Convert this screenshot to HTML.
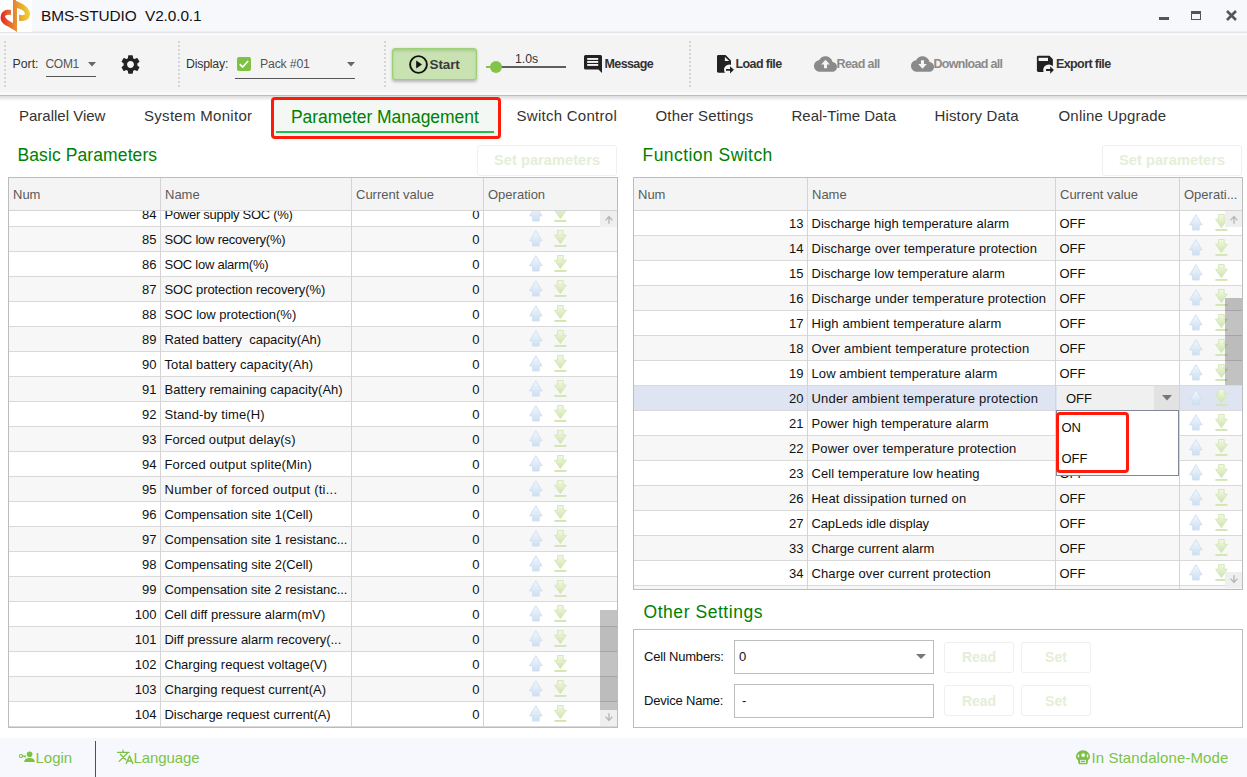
<!DOCTYPE html><html><head><meta charset="utf-8"><style>
html,body{margin:0;padding:0;}
body{width:1247px;height:777px;position:relative;overflow:hidden;background:#fff;font-family:"Liberation Sans", sans-serif;color:#000;}
.a{position:absolute;}
.t{position:absolute;white-space:nowrap;font-size:13px;line-height:1.15;color:#111;}
.clip{position:absolute;overflow:hidden;}
.ic{position:absolute;overflow:visible;}
svg{display:block}
</style></head><body>
<svg width="0" height="0" style="position:absolute"><defs>
<linearGradient id="gu" x1="0" y1="0" x2="0" y2="1"><stop offset="0" stop-color="#f2f8fe"/><stop offset="1" stop-color="#cddff2"/></linearGradient>
<linearGradient id="gd" x1="0" y1="0" x2="0" y2="1"><stop offset="0" stop-color="#f3f9e6"/><stop offset="1" stop-color="#cfe4aa"/></linearGradient>
<linearGradient id="glogo" x1="0" y1="0" x2="1" y2="0"><stop offset="0" stop-color="#e0262a"/><stop offset="0.45" stop-color="#e8842e"/><stop offset="1" stop-color="#ecd835"/></linearGradient>
</defs></svg>
<div class="a" style="left:0px;top:0px;width:1247px;height:32px;background:#f7f8fc"></div>
<div class="a" style="left:0px;top:31px;width:1247px;height:1px;background:#eeeff4"></div>
<div class="a" style="left:0px;top:32px;width:1247px;height:1px;background:#e3e4ea"></div>
<div class="a" style="left:0px;top:0px;width:32px;height:32px;background:#fff"></div>
<svg class="ic" style="left:0px;top:0px" width="32" height="32" viewBox="0 0 32 32"><path d="M13 0 L16 0 L16 1 C22 3 29 7 30 13 C30.5 18 27 21 22 21 L19 21 L19 14.5 C21 15.5 24 15.5 25 14 C25 11 21 9 17 8 L17 32 C13 29 9 27 5 25 C1 22 0 19 1 15 C2 11 6 9 11 10 L11 15 C8 14.5 5 15 5 16.5 C6 19 9 21 13 23 Z" fill="url(#glogo)"/></svg>
<div class="t" style="left:41px;top:6.660000000000002px;font-size:15.4px;color:#111;letter-spacing:-0.1px">BMS-STUDIO&nbsp; V2.0.0.1</div>
<div class="a" style="left:1159px;top:17px;width:9.5px;height:3px;background:#555"></div>
<div class="a" style="left:1191px;top:11px;width:10px;height:9px;box-sizing:border-box;border:1.5px solid #555;border-top-width:3px"></div>
<svg class="ic" style="left:1226px;top:10px" width="11" height="11" viewBox="0 0 11 11"><path d="M1 1 L10 10 M10 1 L1 10" stroke="#555" stroke-width="2.6"/></svg>
<div class="a" style="left:0px;top:33px;width:1247px;height:62px;background:linear-gradient(#fafafa 0px,#fafafa 2px,#f4f4f4 3px,#f4f4f4 59px,#fafafa 60px,#fafafa 62px)"></div>
<div class="a" style="left:0px;top:95px;width:1247px;height:1px;background:#bdbdbd"></div>
<div class="a" style="left:0px;top:96px;width:1247px;height:5px;background:linear-gradient(rgba(0,0,0,0.14),rgba(0,0,0,0))"></div>
<div class="a" style="left:4px;top:41px;width:2px;height:46px;background-image:linear-gradient(#d6d6d6 50%, transparent 50%);background-size:2px 4px"></div>
<div class="a" style="left:178px;top:41px;width:2px;height:46px;background-image:linear-gradient(#d6d6d6 50%, transparent 50%);background-size:2px 4px"></div>
<div class="a" style="left:383.5px;top:41px;width:2px;height:46px;background-image:linear-gradient(#d6d6d6 50%, transparent 50%);background-size:2px 4px"></div>
<div class="a" style="left:689px;top:41px;width:2px;height:46px;background-image:linear-gradient(#d6d6d6 50%, transparent 50%);background-size:2px 4px"></div>
<div class="t" style="left:12.5px;top:57.37px;font-size:12.3px;color:#333">Port:</div>
<div class="t" style="left:45.5px;top:57.64px;font-size:12px;color:#555;letter-spacing:-0.3px">COM1</div>
<svg class="ic" style="left:88px;top:61.5px" width="8" height="5" viewBox="0 0 8 5"><path d="M0 0 L8 0 L4 4.5 Z" fill="#666"/></svg>
<div class="a" style="left:46px;top:76px;width:50px;height:1px;background:#555"></div>
<svg class="ic" style="left:119.2px;top:52.5px" width="23" height="23" viewBox="0 0 24 24"><path fill="#222" d="M19.14 12.94c.04-.3.06-.61.06-.94 0-.32-.02-.64-.07-.94l2.03-1.58a.49.49 0 0 0 .12-.61l-1.92-3.32a.488.488 0 0 0-.59-.22l-2.39.96c-.5-.38-1.03-.7-1.62-.94l-.36-2.54a.484.484 0 0 0-.48-.41h-3.84c-.24 0-.43.17-.47.41l-.36 2.54c-.59.24-1.13.57-1.62.94l-2.39-.96c-.22-.08-.47 0-.59.22L2.74 8.87c-.12.21-.08.47.12.61l2.03 1.58c-.05.3-.09.63-.09.94s.02.64.07.94l-2.03 1.58a.49.49 0 0 0-.12.61l1.92 3.32c.12.22.37.29.59.22l2.39-.96c.5.38 1.03.7 1.62.94l.36 2.54c.05.24.24.41.48.41h3.84c.24 0 .44-.17.47-.41l.36-2.54c.59-.24 1.13-.56 1.62-.94l2.39.96c.22.08.47 0 .59-.22l1.92-3.32c.12-.22.07-.47-.12-.61l-2.01-1.58zM12 15.6c-1.98 0-3.6-1.62-3.6-3.6s1.62-3.6 3.6-3.6 3.6 1.62 3.6 3.6-1.62 3.6-3.6 3.6z"/></svg>
<div class="t" style="left:186px;top:57.37px;font-size:12.3px;color:#333;letter-spacing:-0.2px">Display:</div>
<div class="a" style="left:237px;top:57px;width:14px;height:14px;background:#7dc243;border-radius:2px"></div>
<svg class="ic" style="left:237px;top:57px" width="14" height="14" viewBox="0 0 14 14"><path d="M2.8 7.2 L5.6 10 L11.2 4" fill="none" stroke="#fff" stroke-width="1.7"/></svg>
<div class="t" style="left:260px;top:57.37px;font-size:12.3px;color:#555;letter-spacing:-0.2px">Pack #01</div>
<svg class="ic" style="left:347px;top:62px" width="8" height="5" viewBox="0 0 8 5"><path d="M0 0 L8 0 L4 4.5 Z" fill="#666"/></svg>
<div class="a" style="left:235px;top:78px;width:120px;height:1px;background:#555"></div>
<div class="a" style="left:391.5px;top:48px;width:85px;height:31.5px;box-sizing:border-box;background:#c9e2b1;border:1.5px solid #9ad172;border-radius:3px;box-shadow:inset 0 2px 3px rgba(0,0,0,0.13), 0 1.5px 3px rgba(0,0,0,0.25)"></div>
<svg class="ic" style="left:408.5px;top:55px" width="19" height="19" viewBox="0 0 19 19"><circle cx="9.5" cy="9.5" r="8.4" fill="none" stroke="#111" stroke-width="1.9"/><path d="M7.2 5.6 L13 9.5 L7.2 13.4 Z" fill="#111"/></svg>
<div class="t" style="left:429.5px;top:57.28px;font-size:13.5px;font-weight:bold;color:#3a3a3a;letter-spacing:-0.1px">Start</div>
<div class="a" style="left:486px;top:66px;width:10px;height:2px;background:#84c34a"></div>
<div class="a" style="left:496px;top:66px;width:70px;height:2px;background:#5e5e5e"></div>
<div class="a" style="left:490px;top:61px;width:12px;height:12px;background:#84c34a;border-radius:50%"></div>
<div class="t" style="left:515px;top:52.37px;font-size:12.3px;color:#333">1.0s</div>
<svg class="ic" style="left:584px;top:55px" width="18" height="18" viewBox="0 0 18 18"><path d="M1.5 0 L16.5 0 Q18 0 18 1.5 L18 18 L14.5 14.5 L1.5 14.5 Q0 14.5 0 13 L0 1.5 Q0 0 1.5 0 Z" fill="#222"/><rect x="3.2" y="3" width="11" height="1.9" fill="#f4f4f4"/><rect x="3.2" y="6" width="11" height="1.9" fill="#f4f4f4"/><rect x="3.2" y="9" width="11" height="1.9" fill="#f4f4f4"/></svg>
<div class="t" style="left:604.5px;top:56.69px;font-size:12.5px;font-weight:bold;color:#333;letter-spacing:-0.6px">Message</div>
<svg class="ic" style="left:716px;top:54px" width="19" height="21" viewBox="0 0 19 21"><path d="M2.4 1 L9.6 1 L15 6.5 L15 18.7 L2.4 18.7 Q1 18.7 1 17.3 L1 2.4 Q1 1 2.4 1 Z" fill="#222"/><path d="M8.9 2.9 L8.9 6.9 L13.2 6.9 Z" fill="#f4f4f4"/><circle cx="13.3" cy="15.8" r="5.3" fill="#f4f4f4"/><path d="M10 14.9 L14 14.9 L14 12.2 L17.9 15.8 L14 19.5 L14 16.7 L10 16.7 Z" fill="#222"/></svg>
<div class="t" style="left:735.5px;top:56.69px;font-size:12.5px;font-weight:bold;color:#333;letter-spacing:-0.6px">Load file</div>
<svg class="ic" style="left:814px;top:56px" width="23" height="16" viewBox="0 0 24 16"><path d="M19.35 6.04C18.67 2.59 15.64 0 12 0 9.11 0 6.6 1.64 5.35 4.04 2.34 4.36 0 6.91 0 10c0 3.31 2.69 6 6 6h13c2.76 0 5-2.24 5-5 0-2.64-2.05-4.78-4.65-4.96z" fill="#8a8a8a"/><path d="M12 3.5 L16.5 8.5 L13.6 8.5 L13.6 12.5 L10.4 12.5 L10.4 8.5 L7.5 8.5 Z" fill="#f4f4f4"/></svg>
<div class="t" style="left:836.5px;top:56.69px;font-size:12.5px;font-weight:bold;color:#8a8a8a;letter-spacing:-0.6px">Read all</div>
<svg class="ic" style="left:911px;top:56px" width="23" height="16" viewBox="0 0 24 16"><path d="M19.35 6.04C18.67 2.59 15.64 0 12 0 9.11 0 6.6 1.64 5.35 4.04 2.34 4.36 0 6.91 0 10c0 3.31 2.69 6 6 6h13c2.76 0 5-2.24 5-5 0-2.64-2.05-4.78-4.65-4.96z" fill="#8a8a8a"/><path d="M12 13 L16.5 8 L13.6 8 L13.6 4 L10.4 4 L10.4 8 L7.5 8 Z" fill="#f4f4f4"/></svg>
<div class="t" style="left:933.5px;top:56.69px;font-size:12.5px;font-weight:bold;color:#8a8a8a;letter-spacing:-0.7px">Download all</div>
<svg class="ic" style="left:1036px;top:54px" width="19" height="21" viewBox="0 0 19 21"><path d="M2.3 1.8 L13.5 1.8 L16.9 5.3 L16.9 18 L2.3 18 Q0.9 18 0.9 16.6 L0.9 3.2 Q0.9 1.8 2.3 1.8 Z" fill="#222"/><rect x="2.6" y="3.8" width="9.4" height="3.2" fill="#f4f4f4"/><circle cx="12.8" cy="16" r="5.6" fill="#f4f4f4"/><path d="M10 15.1 L14.2 15.1 L14.2 12.3 L17.9 16 L14.2 19.7 L14.2 16.9 L10 16.9 Z" fill="#222"/></svg>
<div class="t" style="left:1056px;top:56.69px;font-size:12.5px;font-weight:bold;color:#333;letter-spacing:-0.6px">Export file</div>
<div class="t" style="left:19px;top:107.42px;font-size:15px;color:#333;letter-spacing:0px">Parallel View</div>
<div class="t" style="left:144px;top:107.42px;font-size:15px;color:#333;letter-spacing:0.3px">System Monitor</div>
<div class="t" style="left:516.5px;top:107.42px;font-size:15px;color:#333;letter-spacing:0.27px">Switch Control</div>
<div class="t" style="left:655.5px;top:107.42px;font-size:15px;color:#333;letter-spacing:0.15px">Other Settings</div>
<div class="t" style="left:791.5px;top:107.42px;font-size:15px;color:#333;letter-spacing:0px">Real-Time Data</div>
<div class="t" style="left:934.5px;top:107.42px;font-size:15px;color:#333;letter-spacing:0.15px">History Data</div>
<div class="t" style="left:1058.5px;top:107.42px;font-size:15px;color:#333;letter-spacing:0.2px">Online Upgrade</div>
<div class="a" style="left:274px;top:100px;width:225px;height:36px;background:#f3f8f5"></div>
<div class="a" style="left:276px;top:131px;width:218px;height:2px;background:#1fc24b"></div>
<div class="t" style="left:291px;top:106.66px;font-size:17.5px;color:#008000;letter-spacing:-0.05px">Parameter Management</div>
<div class="a" style="left:271px;top:97px;width:230px;height:42px;box-sizing:border-box;border:3px solid #ff1a0a;border-radius:4px"></div>
<div class="t" style="left:17.5px;top:145.16px;font-size:17.5px;color:#008000;letter-spacing:0.1px">Basic Parameters</div>
<div class="a" style="left:477px;top:144.5px;width:140px;height:31px;box-sizing:border-box;border:1px solid #f0f0f0;border-radius:3px;background:#fff"></div>
<div class="t" style="left:494px;top:151.38px;font-size:14.5px;font-weight:bold;color:#e3efd6;letter-spacing:0.1px;margin-top:1px">Set parameters</div>
<div class="t" style="left:642.5px;top:145.16px;font-size:17.5px;color:#008000;letter-spacing:0.45px">Function Switch</div>
<div class="a" style="left:1102px;top:144.5px;width:140px;height:31px;box-sizing:border-box;border:1px solid #f0f0f0;border-radius:3px;background:#fff"></div>
<div class="t" style="left:1119px;top:151.38px;font-size:14.5px;font-weight:bold;color:#e3efd6;letter-spacing:0.1px;margin-top:1px">Set parameters</div>
<div class="a" style="left:8px;top:177px;width:610px;height:551px;background:#fff;box-sizing:border-box;border:1px solid #bcbcbc"></div><div class="a" style="left:9px;top:178px;width:608px;height:32px;background:#f4f4f4"></div><div class="a" style="left:9px;top:210px;width:608px;height:1px;background:#d4d4d4"></div><div class="t" style="left:13px;top:188.23px;font-size:13px;color:#5a5a5a">Num</div><div class="t" style="left:165px;top:188.23px;font-size:13px;color:#5a5a5a">Name</div><div class="t" style="left:356px;top:188.23px;font-size:13px;color:#5a5a5a">Current value</div><div class="t" style="left:488px;top:188.23px;font-size:13px;color:#5a5a5a">Operation</div><div class="a" style="left:160px;top:178px;width:1px;height:32px;background:#d4d4d4"></div><div class="a" style="left:351px;top:178px;width:1px;height:32px;background:#d4d4d4"></div><div class="a" style="left:483px;top:178px;width:1px;height:32px;background:#d4d4d4"></div><div class="clip" style="left:9px;top:211px;width:608px;height:516px"><div class="a" style="left:0px;top:-9px;width:608px;height:24px;background:#fff"></div><div class="a" style="left:0px;top:15px;width:608px;height:1px;background:#d9d9d9"></div><div class="t" style="right:460.5px;top:-2.7699999999999996px">84</div><div class="t" style="left:155.5px;top:-2.7699999999999996px;letter-spacing:-0.274px">Power supply SOC (%)</div><div class="t" style="right:137.5px;top:-2.7699999999999996px">0</div><svg class="ic" style="left:519.5px;top:-5.599999999999994px" width="14" height="17" viewBox="0 0 14 17"><path d="M6.85 0.6 L13.1 10.9 L10.2 10.9 L10.2 16 L3.6 16 L3.6 10.9 L0.6 10.9 Z" fill="url(#gu)" stroke="#cfdff0" stroke-width="0.9" stroke-linejoin="round"/></svg><svg class="ic" style="left:545px;top:-6px" width="14" height="18" viewBox="0 0 14 18"><path d="M3.6 0.5 L9.2 0.5 L9.2 5.2 L12.3 5.2 L6.4 13.6 L0.5 5.2 L3.6 5.2 Z" fill="url(#gd)" stroke="#d3e5b6" stroke-width="0.9" stroke-linejoin="round"/><rect x="0.4" y="15" width="12" height="1.9" fill="#d2e6b2"/></svg><div class="a" style="left:0px;top:16px;width:608px;height:24px;background:#f7f7f7"></div><div class="a" style="left:0px;top:40px;width:608px;height:1px;background:#d9d9d9"></div><div class="t" style="right:460.5px;top:22.23px">85</div><div class="t" style="left:155.5px;top:22.23px;letter-spacing:-0.217px">SOC low recovery(%)</div><div class="t" style="right:137.5px;top:22.23px">0</div><svg class="ic" style="left:519.5px;top:19.400000000000006px" width="14" height="17" viewBox="0 0 14 17"><path d="M6.85 0.6 L13.1 10.9 L10.2 10.9 L10.2 16 L3.6 16 L3.6 10.9 L0.6 10.9 Z" fill="url(#gu)" stroke="#cfdff0" stroke-width="0.9" stroke-linejoin="round"/></svg><svg class="ic" style="left:545px;top:19px" width="14" height="18" viewBox="0 0 14 18"><path d="M3.6 0.5 L9.2 0.5 L9.2 5.2 L12.3 5.2 L6.4 13.6 L0.5 5.2 L3.6 5.2 Z" fill="url(#gd)" stroke="#d3e5b6" stroke-width="0.9" stroke-linejoin="round"/><rect x="0.4" y="15" width="12" height="1.9" fill="#d2e6b2"/></svg><div class="a" style="left:0px;top:41px;width:608px;height:24px;background:#fff"></div><div class="a" style="left:0px;top:65px;width:608px;height:1px;background:#d9d9d9"></div><div class="t" style="right:460.5px;top:47.230000000000004px">86</div><div class="t" style="left:155.5px;top:47.230000000000004px;letter-spacing:-0.240px">SOC low alarm(%)</div><div class="t" style="right:137.5px;top:47.230000000000004px">0</div><svg class="ic" style="left:519.5px;top:44.400000000000006px" width="14" height="17" viewBox="0 0 14 17"><path d="M6.85 0.6 L13.1 10.9 L10.2 10.9 L10.2 16 L3.6 16 L3.6 10.9 L0.6 10.9 Z" fill="url(#gu)" stroke="#cfdff0" stroke-width="0.9" stroke-linejoin="round"/></svg><svg class="ic" style="left:545px;top:44px" width="14" height="18" viewBox="0 0 14 18"><path d="M3.6 0.5 L9.2 0.5 L9.2 5.2 L12.3 5.2 L6.4 13.6 L0.5 5.2 L3.6 5.2 Z" fill="url(#gd)" stroke="#d3e5b6" stroke-width="0.9" stroke-linejoin="round"/><rect x="0.4" y="15" width="12" height="1.9" fill="#d2e6b2"/></svg><div class="a" style="left:0px;top:66px;width:608px;height:24px;background:#f7f7f7"></div><div class="a" style="left:0px;top:90px;width:608px;height:1px;background:#d9d9d9"></div><div class="t" style="right:460.5px;top:72.23px">87</div><div class="t" style="left:155.5px;top:72.23px;letter-spacing:-0.072px">SOC protection recovery(%)</div><div class="t" style="right:137.5px;top:72.23px">0</div><svg class="ic" style="left:519.5px;top:69.39999999999998px" width="14" height="17" viewBox="0 0 14 17"><path d="M6.85 0.6 L13.1 10.9 L10.2 10.9 L10.2 16 L3.6 16 L3.6 10.9 L0.6 10.9 Z" fill="url(#gu)" stroke="#cfdff0" stroke-width="0.9" stroke-linejoin="round"/></svg><svg class="ic" style="left:545px;top:69px" width="14" height="18" viewBox="0 0 14 18"><path d="M3.6 0.5 L9.2 0.5 L9.2 5.2 L12.3 5.2 L6.4 13.6 L0.5 5.2 L3.6 5.2 Z" fill="url(#gd)" stroke="#d3e5b6" stroke-width="0.9" stroke-linejoin="round"/><rect x="0.4" y="15" width="12" height="1.9" fill="#d2e6b2"/></svg><div class="a" style="left:0px;top:91px;width:608px;height:24px;background:#fff"></div><div class="a" style="left:0px;top:115px;width:608px;height:1px;background:#d9d9d9"></div><div class="t" style="right:460.5px;top:97.23px">88</div><div class="t" style="left:155.5px;top:97.23px;letter-spacing:-0.025px">SOC low protection(%)</div><div class="t" style="right:137.5px;top:97.23px">0</div><svg class="ic" style="left:519.5px;top:94.39999999999998px" width="14" height="17" viewBox="0 0 14 17"><path d="M6.85 0.6 L13.1 10.9 L10.2 10.9 L10.2 16 L3.6 16 L3.6 10.9 L0.6 10.9 Z" fill="url(#gu)" stroke="#cfdff0" stroke-width="0.9" stroke-linejoin="round"/></svg><svg class="ic" style="left:545px;top:94px" width="14" height="18" viewBox="0 0 14 18"><path d="M3.6 0.5 L9.2 0.5 L9.2 5.2 L12.3 5.2 L6.4 13.6 L0.5 5.2 L3.6 5.2 Z" fill="url(#gd)" stroke="#d3e5b6" stroke-width="0.9" stroke-linejoin="round"/><rect x="0.4" y="15" width="12" height="1.9" fill="#d2e6b2"/></svg><div class="a" style="left:0px;top:116px;width:608px;height:24px;background:#f7f7f7"></div><div class="a" style="left:0px;top:140px;width:608px;height:1px;background:#d9d9d9"></div><div class="t" style="right:460.5px;top:122.23px">89</div><div class="t" style="left:155.5px;top:122.23px;letter-spacing:-0.035px">Rated battery&nbsp; capacity(Ah)</div><div class="t" style="right:137.5px;top:122.23px">0</div><svg class="ic" style="left:519.5px;top:119.39999999999998px" width="14" height="17" viewBox="0 0 14 17"><path d="M6.85 0.6 L13.1 10.9 L10.2 10.9 L10.2 16 L3.6 16 L3.6 10.9 L0.6 10.9 Z" fill="url(#gu)" stroke="#cfdff0" stroke-width="0.9" stroke-linejoin="round"/></svg><svg class="ic" style="left:545px;top:119px" width="14" height="18" viewBox="0 0 14 18"><path d="M3.6 0.5 L9.2 0.5 L9.2 5.2 L12.3 5.2 L6.4 13.6 L0.5 5.2 L3.6 5.2 Z" fill="url(#gd)" stroke="#d3e5b6" stroke-width="0.9" stroke-linejoin="round"/><rect x="0.4" y="15" width="12" height="1.9" fill="#d2e6b2"/></svg><div class="a" style="left:0px;top:141px;width:608px;height:24px;background:#fff"></div><div class="a" style="left:0px;top:165px;width:608px;height:1px;background:#d9d9d9"></div><div class="t" style="right:460.5px;top:147.23px">90</div><div class="t" style="left:155.5px;top:147.23px;letter-spacing:0.076px">Total battery capacity(Ah)</div><div class="t" style="right:137.5px;top:147.23px">0</div><svg class="ic" style="left:519.5px;top:144.39999999999998px" width="14" height="17" viewBox="0 0 14 17"><path d="M6.85 0.6 L13.1 10.9 L10.2 10.9 L10.2 16 L3.6 16 L3.6 10.9 L0.6 10.9 Z" fill="url(#gu)" stroke="#cfdff0" stroke-width="0.9" stroke-linejoin="round"/></svg><svg class="ic" style="left:545px;top:144px" width="14" height="18" viewBox="0 0 14 18"><path d="M3.6 0.5 L9.2 0.5 L9.2 5.2 L12.3 5.2 L6.4 13.6 L0.5 5.2 L3.6 5.2 Z" fill="url(#gd)" stroke="#d3e5b6" stroke-width="0.9" stroke-linejoin="round"/><rect x="0.4" y="15" width="12" height="1.9" fill="#d2e6b2"/></svg><div class="a" style="left:0px;top:166px;width:608px;height:24px;background:#f7f7f7"></div><div class="a" style="left:0px;top:190px;width:608px;height:1px;background:#d9d9d9"></div><div class="t" style="right:460.5px;top:172.23px">91</div><div class="t" style="left:155.5px;top:172.23px;letter-spacing:0.014px">Battery remaining capacity(Ah)</div><div class="t" style="right:137.5px;top:172.23px">0</div><svg class="ic" style="left:519.5px;top:169.39999999999998px" width="14" height="17" viewBox="0 0 14 17"><path d="M6.85 0.6 L13.1 10.9 L10.2 10.9 L10.2 16 L3.6 16 L3.6 10.9 L0.6 10.9 Z" fill="url(#gu)" stroke="#cfdff0" stroke-width="0.9" stroke-linejoin="round"/></svg><svg class="ic" style="left:545px;top:169px" width="14" height="18" viewBox="0 0 14 18"><path d="M3.6 0.5 L9.2 0.5 L9.2 5.2 L12.3 5.2 L6.4 13.6 L0.5 5.2 L3.6 5.2 Z" fill="url(#gd)" stroke="#d3e5b6" stroke-width="0.9" stroke-linejoin="round"/><rect x="0.4" y="15" width="12" height="1.9" fill="#d2e6b2"/></svg><div class="a" style="left:0px;top:191px;width:608px;height:24px;background:#fff"></div><div class="a" style="left:0px;top:215px;width:608px;height:1px;background:#d9d9d9"></div><div class="t" style="right:460.5px;top:197.23px">92</div><div class="t" style="left:155.5px;top:197.23px;letter-spacing:0.120px">Stand-by time(H)</div><div class="t" style="right:137.5px;top:197.23px">0</div><svg class="ic" style="left:519.5px;top:194.39999999999998px" width="14" height="17" viewBox="0 0 14 17"><path d="M6.85 0.6 L13.1 10.9 L10.2 10.9 L10.2 16 L3.6 16 L3.6 10.9 L0.6 10.9 Z" fill="url(#gu)" stroke="#cfdff0" stroke-width="0.9" stroke-linejoin="round"/></svg><svg class="ic" style="left:545px;top:194px" width="14" height="18" viewBox="0 0 14 18"><path d="M3.6 0.5 L9.2 0.5 L9.2 5.2 L12.3 5.2 L6.4 13.6 L0.5 5.2 L3.6 5.2 Z" fill="url(#gd)" stroke="#d3e5b6" stroke-width="0.9" stroke-linejoin="round"/><rect x="0.4" y="15" width="12" height="1.9" fill="#d2e6b2"/></svg><div class="a" style="left:0px;top:216px;width:608px;height:24px;background:#f7f7f7"></div><div class="a" style="left:0px;top:240px;width:608px;height:1px;background:#d9d9d9"></div><div class="t" style="right:460.5px;top:222.23px">93</div><div class="t" style="left:155.5px;top:222.23px;letter-spacing:0.043px">Forced output delay(s)</div><div class="t" style="right:137.5px;top:222.23px">0</div><svg class="ic" style="left:519.5px;top:219.39999999999998px" width="14" height="17" viewBox="0 0 14 17"><path d="M6.85 0.6 L13.1 10.9 L10.2 10.9 L10.2 16 L3.6 16 L3.6 10.9 L0.6 10.9 Z" fill="url(#gu)" stroke="#cfdff0" stroke-width="0.9" stroke-linejoin="round"/></svg><svg class="ic" style="left:545px;top:219px" width="14" height="18" viewBox="0 0 14 18"><path d="M3.6 0.5 L9.2 0.5 L9.2 5.2 L12.3 5.2 L6.4 13.6 L0.5 5.2 L3.6 5.2 Z" fill="url(#gd)" stroke="#d3e5b6" stroke-width="0.9" stroke-linejoin="round"/><rect x="0.4" y="15" width="12" height="1.9" fill="#d2e6b2"/></svg><div class="a" style="left:0px;top:241px;width:608px;height:24px;background:#fff"></div><div class="a" style="left:0px;top:265px;width:608px;height:1px;background:#d9d9d9"></div><div class="t" style="right:460.5px;top:247.23px">94</div><div class="t" style="left:155.5px;top:247.23px;letter-spacing:0.146px">Forced output splite(Min)</div><div class="t" style="right:137.5px;top:247.23px">0</div><svg class="ic" style="left:519.5px;top:244.39999999999998px" width="14" height="17" viewBox="0 0 14 17"><path d="M6.85 0.6 L13.1 10.9 L10.2 10.9 L10.2 16 L3.6 16 L3.6 10.9 L0.6 10.9 Z" fill="url(#gu)" stroke="#cfdff0" stroke-width="0.9" stroke-linejoin="round"/></svg><svg class="ic" style="left:545px;top:244px" width="14" height="18" viewBox="0 0 14 18"><path d="M3.6 0.5 L9.2 0.5 L9.2 5.2 L12.3 5.2 L6.4 13.6 L0.5 5.2 L3.6 5.2 Z" fill="url(#gd)" stroke="#d3e5b6" stroke-width="0.9" stroke-linejoin="round"/><rect x="0.4" y="15" width="12" height="1.9" fill="#d2e6b2"/></svg><div class="a" style="left:0px;top:266px;width:608px;height:24px;background:#f7f7f7"></div><div class="a" style="left:0px;top:290px;width:608px;height:1px;background:#d9d9d9"></div><div class="t" style="right:460.5px;top:272.23px">95</div><div class="t" style="left:155.5px;top:272.23px;letter-spacing:0.245px">Number of forced output (ti...</div><div class="t" style="right:137.5px;top:272.23px">0</div><svg class="ic" style="left:519.5px;top:269.4px" width="14" height="17" viewBox="0 0 14 17"><path d="M6.85 0.6 L13.1 10.9 L10.2 10.9 L10.2 16 L3.6 16 L3.6 10.9 L0.6 10.9 Z" fill="url(#gu)" stroke="#cfdff0" stroke-width="0.9" stroke-linejoin="round"/></svg><svg class="ic" style="left:545px;top:269px" width="14" height="18" viewBox="0 0 14 18"><path d="M3.6 0.5 L9.2 0.5 L9.2 5.2 L12.3 5.2 L6.4 13.6 L0.5 5.2 L3.6 5.2 Z" fill="url(#gd)" stroke="#d3e5b6" stroke-width="0.9" stroke-linejoin="round"/><rect x="0.4" y="15" width="12" height="1.9" fill="#d2e6b2"/></svg><div class="a" style="left:0px;top:291px;width:608px;height:24px;background:#fff"></div><div class="a" style="left:0px;top:315px;width:608px;height:1px;background:#d9d9d9"></div><div class="t" style="right:460.5px;top:297.23px">96</div><div class="t" style="left:155.5px;top:297.23px;letter-spacing:-0.054px">Compensation site 1(Cell)</div><div class="t" style="right:137.5px;top:297.23px">0</div><svg class="ic" style="left:519.5px;top:294.4px" width="14" height="17" viewBox="0 0 14 17"><path d="M6.85 0.6 L13.1 10.9 L10.2 10.9 L10.2 16 L3.6 16 L3.6 10.9 L0.6 10.9 Z" fill="url(#gu)" stroke="#cfdff0" stroke-width="0.9" stroke-linejoin="round"/></svg><svg class="ic" style="left:545px;top:294px" width="14" height="18" viewBox="0 0 14 18"><path d="M3.6 0.5 L9.2 0.5 L9.2 5.2 L12.3 5.2 L6.4 13.6 L0.5 5.2 L3.6 5.2 Z" fill="url(#gd)" stroke="#d3e5b6" stroke-width="0.9" stroke-linejoin="round"/><rect x="0.4" y="15" width="12" height="1.9" fill="#d2e6b2"/></svg><div class="a" style="left:0px;top:316px;width:608px;height:24px;background:#f7f7f7"></div><div class="a" style="left:0px;top:340px;width:608px;height:1px;background:#d9d9d9"></div><div class="t" style="right:460.5px;top:322.23px">97</div><div class="t" style="left:155.5px;top:322.23px;letter-spacing:-0.068px">Compensation site 1 resistanc...</div><div class="t" style="right:137.5px;top:322.23px">0</div><svg class="ic" style="left:519.5px;top:319.4px" width="14" height="17" viewBox="0 0 14 17"><path d="M6.85 0.6 L13.1 10.9 L10.2 10.9 L10.2 16 L3.6 16 L3.6 10.9 L0.6 10.9 Z" fill="url(#gu)" stroke="#cfdff0" stroke-width="0.9" stroke-linejoin="round"/></svg><svg class="ic" style="left:545px;top:319px" width="14" height="18" viewBox="0 0 14 18"><path d="M3.6 0.5 L9.2 0.5 L9.2 5.2 L12.3 5.2 L6.4 13.6 L0.5 5.2 L3.6 5.2 Z" fill="url(#gd)" stroke="#d3e5b6" stroke-width="0.9" stroke-linejoin="round"/><rect x="0.4" y="15" width="12" height="1.9" fill="#d2e6b2"/></svg><div class="a" style="left:0px;top:341px;width:608px;height:24px;background:#fff"></div><div class="a" style="left:0px;top:365px;width:608px;height:1px;background:#d9d9d9"></div><div class="t" style="right:460.5px;top:347.23px">98</div><div class="t" style="left:155.5px;top:347.23px;letter-spacing:-0.054px">Compensating site 2(Cell)</div><div class="t" style="right:137.5px;top:347.23px">0</div><svg class="ic" style="left:519.5px;top:344.4px" width="14" height="17" viewBox="0 0 14 17"><path d="M6.85 0.6 L13.1 10.9 L10.2 10.9 L10.2 16 L3.6 16 L3.6 10.9 L0.6 10.9 Z" fill="url(#gu)" stroke="#cfdff0" stroke-width="0.9" stroke-linejoin="round"/></svg><svg class="ic" style="left:545px;top:344px" width="14" height="18" viewBox="0 0 14 18"><path d="M3.6 0.5 L9.2 0.5 L9.2 5.2 L12.3 5.2 L6.4 13.6 L0.5 5.2 L3.6 5.2 Z" fill="url(#gd)" stroke="#d3e5b6" stroke-width="0.9" stroke-linejoin="round"/><rect x="0.4" y="15" width="12" height="1.9" fill="#d2e6b2"/></svg><div class="a" style="left:0px;top:366px;width:608px;height:24px;background:#f7f7f7"></div><div class="a" style="left:0px;top:390px;width:608px;height:1px;background:#d9d9d9"></div><div class="t" style="right:460.5px;top:372.23px">99</div><div class="t" style="left:155.5px;top:372.23px;letter-spacing:-0.068px">Compensation site 2 resistanc...</div><div class="t" style="right:137.5px;top:372.23px">0</div><svg class="ic" style="left:519.5px;top:369.4px" width="14" height="17" viewBox="0 0 14 17"><path d="M6.85 0.6 L13.1 10.9 L10.2 10.9 L10.2 16 L3.6 16 L3.6 10.9 L0.6 10.9 Z" fill="url(#gu)" stroke="#cfdff0" stroke-width="0.9" stroke-linejoin="round"/></svg><svg class="ic" style="left:545px;top:369px" width="14" height="18" viewBox="0 0 14 18"><path d="M3.6 0.5 L9.2 0.5 L9.2 5.2 L12.3 5.2 L6.4 13.6 L0.5 5.2 L3.6 5.2 Z" fill="url(#gd)" stroke="#d3e5b6" stroke-width="0.9" stroke-linejoin="round"/><rect x="0.4" y="15" width="12" height="1.9" fill="#d2e6b2"/></svg><div class="a" style="left:0px;top:391px;width:608px;height:24px;background:#fff"></div><div class="a" style="left:0px;top:415px;width:608px;height:1px;background:#d9d9d9"></div><div class="t" style="right:460.5px;top:397.23px">100</div><div class="t" style="left:155.5px;top:397.23px;letter-spacing:-0.030px">Cell diff pressure alarm(mV)</div><div class="t" style="right:137.5px;top:397.23px">0</div><svg class="ic" style="left:519.5px;top:394.4px" width="14" height="17" viewBox="0 0 14 17"><path d="M6.85 0.6 L13.1 10.9 L10.2 10.9 L10.2 16 L3.6 16 L3.6 10.9 L0.6 10.9 Z" fill="url(#gu)" stroke="#cfdff0" stroke-width="0.9" stroke-linejoin="round"/></svg><svg class="ic" style="left:545px;top:394px" width="14" height="18" viewBox="0 0 14 18"><path d="M3.6 0.5 L9.2 0.5 L9.2 5.2 L12.3 5.2 L6.4 13.6 L0.5 5.2 L3.6 5.2 Z" fill="url(#gd)" stroke="#d3e5b6" stroke-width="0.9" stroke-linejoin="round"/><rect x="0.4" y="15" width="12" height="1.9" fill="#d2e6b2"/></svg><div class="a" style="left:0px;top:416px;width:608px;height:24px;background:#f7f7f7"></div><div class="a" style="left:0px;top:440px;width:608px;height:1px;background:#d9d9d9"></div><div class="t" style="right:460.5px;top:422.23px">101</div><div class="t" style="left:155.5px;top:422.23px;letter-spacing:-0.045px">Diff pressure alarm recovery(...</div><div class="t" style="right:137.5px;top:422.23px">0</div><svg class="ic" style="left:519.5px;top:419.4px" width="14" height="17" viewBox="0 0 14 17"><path d="M6.85 0.6 L13.1 10.9 L10.2 10.9 L10.2 16 L3.6 16 L3.6 10.9 L0.6 10.9 Z" fill="url(#gu)" stroke="#cfdff0" stroke-width="0.9" stroke-linejoin="round"/></svg><svg class="ic" style="left:545px;top:419px" width="14" height="18" viewBox="0 0 14 18"><path d="M3.6 0.5 L9.2 0.5 L9.2 5.2 L12.3 5.2 L6.4 13.6 L0.5 5.2 L3.6 5.2 Z" fill="url(#gd)" stroke="#d3e5b6" stroke-width="0.9" stroke-linejoin="round"/><rect x="0.4" y="15" width="12" height="1.9" fill="#d2e6b2"/></svg><div class="a" style="left:0px;top:441px;width:608px;height:24px;background:#fff"></div><div class="a" style="left:0px;top:465px;width:608px;height:1px;background:#d9d9d9"></div><div class="t" style="right:460.5px;top:447.23px">102</div><div class="t" style="left:155.5px;top:447.23px;letter-spacing:-0.004px">Charging request voltage(V)</div><div class="t" style="right:137.5px;top:447.23px">0</div><svg class="ic" style="left:519.5px;top:444.4px" width="14" height="17" viewBox="0 0 14 17"><path d="M6.85 0.6 L13.1 10.9 L10.2 10.9 L10.2 16 L3.6 16 L3.6 10.9 L0.6 10.9 Z" fill="url(#gu)" stroke="#cfdff0" stroke-width="0.9" stroke-linejoin="round"/></svg><svg class="ic" style="left:545px;top:444px" width="14" height="18" viewBox="0 0 14 18"><path d="M3.6 0.5 L9.2 0.5 L9.2 5.2 L12.3 5.2 L6.4 13.6 L0.5 5.2 L3.6 5.2 Z" fill="url(#gd)" stroke="#d3e5b6" stroke-width="0.9" stroke-linejoin="round"/><rect x="0.4" y="15" width="12" height="1.9" fill="#d2e6b2"/></svg><div class="a" style="left:0px;top:466px;width:608px;height:24px;background:#f7f7f7"></div><div class="a" style="left:0px;top:490px;width:608px;height:1px;background:#d9d9d9"></div><div class="t" style="right:460.5px;top:472.23px">103</div><div class="t" style="left:155.5px;top:472.23px;letter-spacing:0.019px">Charging request current(A)</div><div class="t" style="right:137.5px;top:472.23px">0</div><svg class="ic" style="left:519.5px;top:469.4px" width="14" height="17" viewBox="0 0 14 17"><path d="M6.85 0.6 L13.1 10.9 L10.2 10.9 L10.2 16 L3.6 16 L3.6 10.9 L0.6 10.9 Z" fill="url(#gu)" stroke="#cfdff0" stroke-width="0.9" stroke-linejoin="round"/></svg><svg class="ic" style="left:545px;top:469px" width="14" height="18" viewBox="0 0 14 18"><path d="M3.6 0.5 L9.2 0.5 L9.2 5.2 L12.3 5.2 L6.4 13.6 L0.5 5.2 L3.6 5.2 Z" fill="url(#gd)" stroke="#d3e5b6" stroke-width="0.9" stroke-linejoin="round"/><rect x="0.4" y="15" width="12" height="1.9" fill="#d2e6b2"/></svg><div class="a" style="left:0px;top:491px;width:608px;height:24px;background:#fff"></div><div class="a" style="left:0px;top:515px;width:608px;height:1px;background:#d9d9d9"></div><div class="t" style="right:460.5px;top:497.23px">104</div><div class="t" style="left:155.5px;top:497.23px;letter-spacing:-0.026px">Discharge request current(A)</div><div class="t" style="right:137.5px;top:497.23px">0</div><svg class="ic" style="left:519.5px;top:494.4px" width="14" height="17" viewBox="0 0 14 17"><path d="M6.85 0.6 L13.1 10.9 L10.2 10.9 L10.2 16 L3.6 16 L3.6 10.9 L0.6 10.9 Z" fill="url(#gu)" stroke="#cfdff0" stroke-width="0.9" stroke-linejoin="round"/></svg><svg class="ic" style="left:545px;top:494px" width="14" height="18" viewBox="0 0 14 18"><path d="M3.6 0.5 L9.2 0.5 L9.2 5.2 L12.3 5.2 L6.4 13.6 L0.5 5.2 L3.6 5.2 Z" fill="url(#gd)" stroke="#d3e5b6" stroke-width="0.9" stroke-linejoin="round"/><rect x="0.4" y="15" width="12" height="1.9" fill="#d2e6b2"/></svg><div class="a" style="left:0px;top:516px;width:608px;height:25px;background:#f7f7f7"></div><div class="a" style="left:151px;top:0px;width:1px;height:516px;background:#d4d4d4"></div><div class="a" style="left:342px;top:0px;width:1px;height:516px;background:#d4d4d4"></div><div class="a" style="left:474px;top:0px;width:1px;height:516px;background:#d4d4d4"></div></div>
<div class="a" style="left:600px;top:211px;width:17px;height:16px;background:#efefef"></div>
<svg class="ic" style="left:600px;top:211px" width="17" height="16" viewBox="0 0 17 16"><path d="M9 5.6 L9 12.8 M5.6 9.4 L9 5.6 L12.4 9.4" fill="none" stroke="#b8b8b8" stroke-width="1.4"/></svg>
<div class="a" style="left:600px;top:610px;width:17px;height:100px;background:rgba(0,0,0,0.24)"></div>
<div class="a" style="left:600px;top:710px;width:17px;height:16px;background:#efefef"></div>
<svg class="ic" style="left:600px;top:710px" width="17" height="16" viewBox="0 0 17 16"><path d="M9 3.2 L9 10.4 M5.6 6.6 L9 10.4 L12.4 6.6" fill="none" stroke="#b8b8b8" stroke-width="1.4"/></svg>
<div class="a" style="left:633px;top:177px;width:610px;height:413px;background:#fff;box-sizing:border-box;border:1px solid #bcbcbc"></div><div class="a" style="left:634px;top:178px;width:608px;height:32px;background:#f4f4f4"></div><div class="a" style="left:634px;top:210px;width:608px;height:1px;background:#d4d4d4"></div><div class="t" style="left:638px;top:188.23px;font-size:13px;color:#5a5a5a">Num</div><div class="t" style="left:812px;top:188.23px;font-size:13px;color:#5a5a5a">Name</div><div class="t" style="left:1060px;top:188.23px;font-size:13px;color:#5a5a5a">Current value</div><div class="t" style="left:1184px;top:188.23px;font-size:13px;color:#5a5a5a">Operati...</div><div class="a" style="left:807px;top:178px;width:1px;height:32px;background:#d4d4d4"></div><div class="a" style="left:1055px;top:178px;width:1px;height:32px;background:#d4d4d4"></div><div class="a" style="left:1179px;top:178px;width:1px;height:32px;background:#d4d4d4"></div><div class="clip" style="left:634px;top:211px;width:608px;height:378px"><div class="a" style="left:0px;top:0px;width:608px;height:24px;background:#fff"></div><div class="a" style="left:0px;top:24px;width:608px;height:1px;background:#d9d9d9"></div><div class="t" style="right:438.5px;top:6.23px">13</div><div class="t" style="left:177.5px;top:6.23px;letter-spacing:0.035px">Discharge high temperature alarm</div><div class="t" style="left:425.5px;top:6.23px">OFF</div><svg class="ic" style="left:554.5px;top:3.4000000000000057px" width="14" height="17" viewBox="0 0 14 17"><path d="M6.85 0.6 L13.1 10.9 L10.2 10.9 L10.2 16 L3.6 16 L3.6 10.9 L0.6 10.9 Z" fill="url(#gu)" stroke="#cfdff0" stroke-width="0.9" stroke-linejoin="round"/></svg><svg class="ic" style="left:580.5px;top:3px" width="14" height="18" viewBox="0 0 14 18"><path d="M3.6 0.5 L9.2 0.5 L9.2 5.2 L12.3 5.2 L6.4 13.6 L0.5 5.2 L3.6 5.2 Z" fill="url(#gd)" stroke="#d3e5b6" stroke-width="0.9" stroke-linejoin="round"/><rect x="0.4" y="15" width="12" height="1.9" fill="#d2e6b2"/></svg><div class="a" style="left:0px;top:25px;width:608px;height:24px;background:#f7f7f7"></div><div class="a" style="left:0px;top:49px;width:608px;height:1px;background:#d9d9d9"></div><div class="t" style="right:438.5px;top:31.23px">14</div><div class="t" style="left:177.5px;top:31.23px;letter-spacing:0.100px">Discharge over temperature protection</div><div class="t" style="left:425.5px;top:31.23px">OFF</div><svg class="ic" style="left:554.5px;top:28.400000000000006px" width="14" height="17" viewBox="0 0 14 17"><path d="M6.85 0.6 L13.1 10.9 L10.2 10.9 L10.2 16 L3.6 16 L3.6 10.9 L0.6 10.9 Z" fill="url(#gu)" stroke="#cfdff0" stroke-width="0.9" stroke-linejoin="round"/></svg><svg class="ic" style="left:580.5px;top:28px" width="14" height="18" viewBox="0 0 14 18"><path d="M3.6 0.5 L9.2 0.5 L9.2 5.2 L12.3 5.2 L6.4 13.6 L0.5 5.2 L3.6 5.2 Z" fill="url(#gd)" stroke="#d3e5b6" stroke-width="0.9" stroke-linejoin="round"/><rect x="0.4" y="15" width="12" height="1.9" fill="#d2e6b2"/></svg><div class="a" style="left:0px;top:50px;width:608px;height:24px;background:#fff"></div><div class="a" style="left:0px;top:74px;width:608px;height:1px;background:#d9d9d9"></div><div class="t" style="right:438.5px;top:56.230000000000004px">15</div><div class="t" style="left:177.5px;top:56.230000000000004px;letter-spacing:0.060px">Discharge low temperature alarm</div><div class="t" style="left:425.5px;top:56.230000000000004px">OFF</div><svg class="ic" style="left:554.5px;top:53.39999999999998px" width="14" height="17" viewBox="0 0 14 17"><path d="M6.85 0.6 L13.1 10.9 L10.2 10.9 L10.2 16 L3.6 16 L3.6 10.9 L0.6 10.9 Z" fill="url(#gu)" stroke="#cfdff0" stroke-width="0.9" stroke-linejoin="round"/></svg><svg class="ic" style="left:580.5px;top:53px" width="14" height="18" viewBox="0 0 14 18"><path d="M3.6 0.5 L9.2 0.5 L9.2 5.2 L12.3 5.2 L6.4 13.6 L0.5 5.2 L3.6 5.2 Z" fill="url(#gd)" stroke="#d3e5b6" stroke-width="0.9" stroke-linejoin="round"/><rect x="0.4" y="15" width="12" height="1.9" fill="#d2e6b2"/></svg><div class="a" style="left:0px;top:75px;width:608px;height:24px;background:#f7f7f7"></div><div class="a" style="left:0px;top:99px;width:608px;height:1px;background:#d9d9d9"></div><div class="t" style="right:438.5px;top:81.23px">16</div><div class="t" style="left:177.5px;top:81.23px;letter-spacing:0.127px">Discharge under temperature protection</div><div class="t" style="left:425.5px;top:81.23px">OFF</div><svg class="ic" style="left:554.5px;top:78.39999999999998px" width="14" height="17" viewBox="0 0 14 17"><path d="M6.85 0.6 L13.1 10.9 L10.2 10.9 L10.2 16 L3.6 16 L3.6 10.9 L0.6 10.9 Z" fill="url(#gu)" stroke="#cfdff0" stroke-width="0.9" stroke-linejoin="round"/></svg><svg class="ic" style="left:580.5px;top:78px" width="14" height="18" viewBox="0 0 14 18"><path d="M3.6 0.5 L9.2 0.5 L9.2 5.2 L12.3 5.2 L6.4 13.6 L0.5 5.2 L3.6 5.2 Z" fill="url(#gd)" stroke="#d3e5b6" stroke-width="0.9" stroke-linejoin="round"/><rect x="0.4" y="15" width="12" height="1.9" fill="#d2e6b2"/></svg><div class="a" style="left:0px;top:100px;width:608px;height:24px;background:#fff"></div><div class="a" style="left:0px;top:124px;width:608px;height:1px;background:#d9d9d9"></div><div class="t" style="right:438.5px;top:106.23px">17</div><div class="t" style="left:177.5px;top:106.23px;letter-spacing:0.117px">High ambient temperature alarm</div><div class="t" style="left:425.5px;top:106.23px">OFF</div><svg class="ic" style="left:554.5px;top:103.39999999999998px" width="14" height="17" viewBox="0 0 14 17"><path d="M6.85 0.6 L13.1 10.9 L10.2 10.9 L10.2 16 L3.6 16 L3.6 10.9 L0.6 10.9 Z" fill="url(#gu)" stroke="#cfdff0" stroke-width="0.9" stroke-linejoin="round"/></svg><svg class="ic" style="left:580.5px;top:103px" width="14" height="18" viewBox="0 0 14 18"><path d="M3.6 0.5 L9.2 0.5 L9.2 5.2 L12.3 5.2 L6.4 13.6 L0.5 5.2 L3.6 5.2 Z" fill="url(#gd)" stroke="#d3e5b6" stroke-width="0.9" stroke-linejoin="round"/><rect x="0.4" y="15" width="12" height="1.9" fill="#d2e6b2"/></svg><div class="a" style="left:0px;top:125px;width:608px;height:24px;background:#f7f7f7"></div><div class="a" style="left:0px;top:149px;width:608px;height:1px;background:#d9d9d9"></div><div class="t" style="right:438.5px;top:131.23px">18</div><div class="t" style="left:177.5px;top:131.23px;letter-spacing:0.153px">Over ambient temperature protection</div><div class="t" style="left:425.5px;top:131.23px">OFF</div><svg class="ic" style="left:554.5px;top:128.39999999999998px" width="14" height="17" viewBox="0 0 14 17"><path d="M6.85 0.6 L13.1 10.9 L10.2 10.9 L10.2 16 L3.6 16 L3.6 10.9 L0.6 10.9 Z" fill="url(#gu)" stroke="#cfdff0" stroke-width="0.9" stroke-linejoin="round"/></svg><svg class="ic" style="left:580.5px;top:128px" width="14" height="18" viewBox="0 0 14 18"><path d="M3.6 0.5 L9.2 0.5 L9.2 5.2 L12.3 5.2 L6.4 13.6 L0.5 5.2 L3.6 5.2 Z" fill="url(#gd)" stroke="#d3e5b6" stroke-width="0.9" stroke-linejoin="round"/><rect x="0.4" y="15" width="12" height="1.9" fill="#d2e6b2"/></svg><div class="a" style="left:0px;top:150px;width:608px;height:24px;background:#fff"></div><div class="a" style="left:0px;top:174px;width:608px;height:1px;background:#d9d9d9"></div><div class="t" style="right:438.5px;top:156.23px">19</div><div class="t" style="left:177.5px;top:156.23px;letter-spacing:0.086px">Low ambient temperature alarm</div><div class="t" style="left:425.5px;top:156.23px">OFF</div><svg class="ic" style="left:554.5px;top:153.39999999999998px" width="14" height="17" viewBox="0 0 14 17"><path d="M6.85 0.6 L13.1 10.9 L10.2 10.9 L10.2 16 L3.6 16 L3.6 10.9 L0.6 10.9 Z" fill="url(#gu)" stroke="#cfdff0" stroke-width="0.9" stroke-linejoin="round"/></svg><svg class="ic" style="left:580.5px;top:153px" width="14" height="18" viewBox="0 0 14 18"><path d="M3.6 0.5 L9.2 0.5 L9.2 5.2 L12.3 5.2 L6.4 13.6 L0.5 5.2 L3.6 5.2 Z" fill="url(#gd)" stroke="#d3e5b6" stroke-width="0.9" stroke-linejoin="round"/><rect x="0.4" y="15" width="12" height="1.9" fill="#d2e6b2"/></svg><div class="a" style="left:0px;top:175px;width:608px;height:24px;background:#dfe4f2"></div><div class="a" style="left:0px;top:199px;width:608px;height:1px;background:#d9d9d9"></div><div class="t" style="right:438.5px;top:181.23px">20</div><div class="t" style="left:177.5px;top:181.23px;letter-spacing:0.191px">Under ambient temperature protection</div><svg class="ic" style="left:554.5px;top:178.39999999999998px" width="14" height="17" viewBox="0 0 14 17"><path d="M6.85 0.6 L13.1 10.9 L10.2 10.9 L10.2 16 L3.6 16 L3.6 10.9 L0.6 10.9 Z" fill="url(#gu)" stroke="#cfdff0" stroke-width="0.9" stroke-linejoin="round"/></svg><svg class="ic" style="left:580.5px;top:178px" width="14" height="18" viewBox="0 0 14 18"><path d="M3.6 0.5 L9.2 0.5 L9.2 5.2 L12.3 5.2 L6.4 13.6 L0.5 5.2 L3.6 5.2 Z" fill="url(#gd)" stroke="#d3e5b6" stroke-width="0.9" stroke-linejoin="round"/><rect x="0.4" y="15" width="12" height="1.9" fill="#d2e6b2"/></svg><div class="a" style="left:0px;top:200px;width:608px;height:24px;background:#fff"></div><div class="a" style="left:0px;top:224px;width:608px;height:1px;background:#d9d9d9"></div><div class="t" style="right:438.5px;top:206.23px">21</div><div class="t" style="left:177.5px;top:206.23px;letter-spacing:0.078px">Power high temperature alarm</div><div class="t" style="left:425.5px;top:206.23px">OFF</div><svg class="ic" style="left:554.5px;top:203.39999999999998px" width="14" height="17" viewBox="0 0 14 17"><path d="M6.85 0.6 L13.1 10.9 L10.2 10.9 L10.2 16 L3.6 16 L3.6 10.9 L0.6 10.9 Z" fill="url(#gu)" stroke="#cfdff0" stroke-width="0.9" stroke-linejoin="round"/></svg><svg class="ic" style="left:580.5px;top:203px" width="14" height="18" viewBox="0 0 14 18"><path d="M3.6 0.5 L9.2 0.5 L9.2 5.2 L12.3 5.2 L6.4 13.6 L0.5 5.2 L3.6 5.2 Z" fill="url(#gd)" stroke="#d3e5b6" stroke-width="0.9" stroke-linejoin="round"/><rect x="0.4" y="15" width="12" height="1.9" fill="#d2e6b2"/></svg><div class="a" style="left:0px;top:225px;width:608px;height:24px;background:#f7f7f7"></div><div class="a" style="left:0px;top:249px;width:608px;height:1px;background:#d9d9d9"></div><div class="t" style="right:438.5px;top:231.23px">22</div><div class="t" style="left:177.5px;top:231.23px;letter-spacing:0.144px">Power over temperature protection</div><div class="t" style="left:425.5px;top:231.23px">OFF</div><svg class="ic" style="left:554.5px;top:228.39999999999998px" width="14" height="17" viewBox="0 0 14 17"><path d="M6.85 0.6 L13.1 10.9 L10.2 10.9 L10.2 16 L3.6 16 L3.6 10.9 L0.6 10.9 Z" fill="url(#gu)" stroke="#cfdff0" stroke-width="0.9" stroke-linejoin="round"/></svg><svg class="ic" style="left:580.5px;top:228px" width="14" height="18" viewBox="0 0 14 18"><path d="M3.6 0.5 L9.2 0.5 L9.2 5.2 L12.3 5.2 L6.4 13.6 L0.5 5.2 L3.6 5.2 Z" fill="url(#gd)" stroke="#d3e5b6" stroke-width="0.9" stroke-linejoin="round"/><rect x="0.4" y="15" width="12" height="1.9" fill="#d2e6b2"/></svg><div class="a" style="left:0px;top:250px;width:608px;height:24px;background:#fff"></div><div class="a" style="left:0px;top:274px;width:608px;height:1px;background:#d9d9d9"></div><div class="t" style="right:438.5px;top:256.23px">23</div><div class="t" style="left:177.5px;top:256.23px;letter-spacing:0.096px">Cell temperature low heating</div><div class="t" style="left:425.5px;top:256.23px">OFF</div><svg class="ic" style="left:554.5px;top:253.39999999999998px" width="14" height="17" viewBox="0 0 14 17"><path d="M6.85 0.6 L13.1 10.9 L10.2 10.9 L10.2 16 L3.6 16 L3.6 10.9 L0.6 10.9 Z" fill="url(#gu)" stroke="#cfdff0" stroke-width="0.9" stroke-linejoin="round"/></svg><svg class="ic" style="left:580.5px;top:253px" width="14" height="18" viewBox="0 0 14 18"><path d="M3.6 0.5 L9.2 0.5 L9.2 5.2 L12.3 5.2 L6.4 13.6 L0.5 5.2 L3.6 5.2 Z" fill="url(#gd)" stroke="#d3e5b6" stroke-width="0.9" stroke-linejoin="round"/><rect x="0.4" y="15" width="12" height="1.9" fill="#d2e6b2"/></svg><div class="a" style="left:0px;top:275px;width:608px;height:24px;background:#f7f7f7"></div><div class="a" style="left:0px;top:299px;width:608px;height:1px;background:#d9d9d9"></div><div class="t" style="right:438.5px;top:281.23px">26</div><div class="t" style="left:177.5px;top:281.23px;letter-spacing:0.144px">Heat dissipation turned on</div><div class="t" style="left:425.5px;top:281.23px">OFF</div><svg class="ic" style="left:554.5px;top:278.4px" width="14" height="17" viewBox="0 0 14 17"><path d="M6.85 0.6 L13.1 10.9 L10.2 10.9 L10.2 16 L3.6 16 L3.6 10.9 L0.6 10.9 Z" fill="url(#gu)" stroke="#cfdff0" stroke-width="0.9" stroke-linejoin="round"/></svg><svg class="ic" style="left:580.5px;top:278px" width="14" height="18" viewBox="0 0 14 18"><path d="M3.6 0.5 L9.2 0.5 L9.2 5.2 L12.3 5.2 L6.4 13.6 L0.5 5.2 L3.6 5.2 Z" fill="url(#gd)" stroke="#d3e5b6" stroke-width="0.9" stroke-linejoin="round"/><rect x="0.4" y="15" width="12" height="1.9" fill="#d2e6b2"/></svg><div class="a" style="left:0px;top:300px;width:608px;height:24px;background:#fff"></div><div class="a" style="left:0px;top:324px;width:608px;height:1px;background:#d9d9d9"></div><div class="t" style="right:438.5px;top:306.23px">27</div><div class="t" style="left:177.5px;top:306.23px;letter-spacing:-0.126px">CapLeds idle display</div><div class="t" style="left:425.5px;top:306.23px">OFF</div><svg class="ic" style="left:554.5px;top:303.4px" width="14" height="17" viewBox="0 0 14 17"><path d="M6.85 0.6 L13.1 10.9 L10.2 10.9 L10.2 16 L3.6 16 L3.6 10.9 L0.6 10.9 Z" fill="url(#gu)" stroke="#cfdff0" stroke-width="0.9" stroke-linejoin="round"/></svg><svg class="ic" style="left:580.5px;top:303px" width="14" height="18" viewBox="0 0 14 18"><path d="M3.6 0.5 L9.2 0.5 L9.2 5.2 L12.3 5.2 L6.4 13.6 L0.5 5.2 L3.6 5.2 Z" fill="url(#gd)" stroke="#d3e5b6" stroke-width="0.9" stroke-linejoin="round"/><rect x="0.4" y="15" width="12" height="1.9" fill="#d2e6b2"/></svg><div class="a" style="left:0px;top:325px;width:608px;height:24px;background:#f7f7f7"></div><div class="a" style="left:0px;top:349px;width:608px;height:1px;background:#d9d9d9"></div><div class="t" style="right:438.5px;top:331.23px">33</div><div class="t" style="left:177.5px;top:331.23px;letter-spacing:0.005px">Charge current alarm</div><div class="t" style="left:425.5px;top:331.23px">OFF</div><svg class="ic" style="left:554.5px;top:328.4px" width="14" height="17" viewBox="0 0 14 17"><path d="M6.85 0.6 L13.1 10.9 L10.2 10.9 L10.2 16 L3.6 16 L3.6 10.9 L0.6 10.9 Z" fill="url(#gu)" stroke="#cfdff0" stroke-width="0.9" stroke-linejoin="round"/></svg><svg class="ic" style="left:580.5px;top:328px" width="14" height="18" viewBox="0 0 14 18"><path d="M3.6 0.5 L9.2 0.5 L9.2 5.2 L12.3 5.2 L6.4 13.6 L0.5 5.2 L3.6 5.2 Z" fill="url(#gd)" stroke="#d3e5b6" stroke-width="0.9" stroke-linejoin="round"/><rect x="0.4" y="15" width="12" height="1.9" fill="#d2e6b2"/></svg><div class="a" style="left:0px;top:350px;width:608px;height:24px;background:#fff"></div><div class="a" style="left:0px;top:374px;width:608px;height:1px;background:#d9d9d9"></div><div class="t" style="right:438.5px;top:356.23px">34</div><div class="t" style="left:177.5px;top:356.23px;letter-spacing:0.103px">Charge over current protection</div><div class="t" style="left:425.5px;top:356.23px">OFF</div><svg class="ic" style="left:554.5px;top:353.4px" width="14" height="17" viewBox="0 0 14 17"><path d="M6.85 0.6 L13.1 10.9 L10.2 10.9 L10.2 16 L3.6 16 L3.6 10.9 L0.6 10.9 Z" fill="url(#gu)" stroke="#cfdff0" stroke-width="0.9" stroke-linejoin="round"/></svg><svg class="ic" style="left:580.5px;top:353px" width="14" height="18" viewBox="0 0 14 18"><path d="M3.6 0.5 L9.2 0.5 L9.2 5.2 L12.3 5.2 L6.4 13.6 L0.5 5.2 L3.6 5.2 Z" fill="url(#gd)" stroke="#d3e5b6" stroke-width="0.9" stroke-linejoin="round"/><rect x="0.4" y="15" width="12" height="1.9" fill="#d2e6b2"/></svg><div class="a" style="left:0px;top:375px;width:608px;height:25px;background:#f7f7f7"></div><div class="a" style="left:173px;top:0px;width:1px;height:378px;background:#d4d4d4"></div><div class="a" style="left:421px;top:0px;width:1px;height:378px;background:#d4d4d4"></div><div class="a" style="left:545px;top:0px;width:1px;height:378px;background:#d4d4d4"></div></div>
<div class="a" style="left:1225px;top:211px;width:17px;height:16px;background:rgba(238,238,238,0.92)"></div>
<svg class="ic" style="left:1225px;top:211px" width="17" height="16" viewBox="0 0 17 16"><path d="M9 5.6 L9 12.8 M5.6 9.4 L9 5.6 L12.4 9.4" fill="none" stroke="#b8b8b8" stroke-width="1.4"/></svg>
<div class="a" style="left:1225px;top:298px;width:17px;height:87px;background:rgba(0,0,0,0.24)"></div>
<div class="a" style="left:1225px;top:572px;width:17px;height:16px;background:rgba(238,238,238,0.92)"></div>
<svg class="ic" style="left:1225px;top:572px" width="17" height="16" viewBox="0 0 17 16"><path d="M9 3.2 L9 10.4 M5.6 6.6 L9 10.4 L12.4 6.6" fill="none" stroke="#b8b8b8" stroke-width="1.4"/></svg>
<div class="a" style="left:1057px;top:386px;width:122px;height:24px;background:#f0f0f0"></div>
<div class="a" style="left:1154px;top:386px;width:25px;height:24px;background:#e2e2e2"></div>
<svg class="ic" style="left:1162px;top:395px" width="10" height="6" viewBox="0 0 10 6"><path d="M0 0 L10 0 L5 5.5 Z" fill="#777"/></svg>
<div class="t" style="left:1066px;top:392.23px;font-size:13px;color:#111">OFF</div>
<div class="a" style="left:1056px;top:410px;width:123px;height:66px;box-sizing:border-box;background:#fff;border:1px solid #80889a"></div>
<div class="t" style="left:1061.5px;top:421.23px;font-size:13px;color:#111">ON</div>
<div class="t" style="left:1061.5px;top:451.73px;font-size:13px;color:#111">OFF</div>
<div class="a" style="left:1056px;top:412px;width:73px;height:61px;box-sizing:border-box;border:3px solid #ff1a0a;border-radius:4px"></div>
<div class="t" style="left:643.5px;top:602.16px;font-size:17.5px;color:#008000;letter-spacing:0.55px">Other Settings</div>
<div class="a" style="left:633px;top:629px;width:610px;height:99px;box-sizing:border-box;border:1px solid #bcbcbc;background:#fff"></div>
<div class="t" style="left:644px;top:650.23px;font-size:13px;color:#111;letter-spacing:-0.2px">Cell Numbers:</div>
<div class="a" style="left:734px;top:640px;width:200px;height:34px;box-sizing:border-box;border:1px solid #bdbdbd;background:#fff"></div>
<div class="t" style="left:739px;top:650.23px;font-size:13px;color:#111">0</div>
<svg class="ic" style="left:916px;top:654px" width="10" height="6" viewBox="0 0 10 6"><path d="M0 0 L10 0 L5 5 Z" fill="#777"/></svg>
<div class="t" style="left:644px;top:694.23px;font-size:13px;color:#111;letter-spacing:-0.2px">Device Name:</div>
<div class="a" style="left:734px;top:684px;width:200px;height:34px;box-sizing:border-box;border:1px solid #bdbdbd;background:#fff"></div>
<div class="t" style="left:742px;top:694.23px;font-size:13px;color:#111">-</div>
<div class="a" style="left:944px;top:641.5px;width:70px;height:31px;box-sizing:border-box;border:1px solid #efefef;border-radius:3px;background:#fff"></div>
<div class="t" style="left:944px;top:649.0px;width:70px;text-align:center;font-size:14px;font-weight:bold;color:#e3efd6">Read</div>
<div class="a" style="left:1021px;top:641.5px;width:70px;height:31px;box-sizing:border-box;border:1px solid #efefef;border-radius:3px;background:#fff"></div>
<div class="t" style="left:1021px;top:649.0px;width:70px;text-align:center;font-size:14px;font-weight:bold;color:#e3efd6">Set</div>
<div class="a" style="left:944px;top:685px;width:70px;height:31px;box-sizing:border-box;border:1px solid #efefef;border-radius:3px;background:#fff"></div>
<div class="t" style="left:944px;top:692.5px;width:70px;text-align:center;font-size:14px;font-weight:bold;color:#e3efd6">Read</div>
<div class="a" style="left:1021px;top:685px;width:70px;height:31px;box-sizing:border-box;border:1px solid #efefef;border-radius:3px;background:#fff"></div>
<div class="t" style="left:1021px;top:692.5px;width:70px;text-align:center;font-size:14px;font-weight:bold;color:#e3efd6">Set</div>
<div class="a" style="left:0px;top:738px;width:1247px;height:39px;background:#f7f8fd"></div>
<div class="a" style="left:95px;top:741px;width:1px;height:36px;background:#505050"></div>
<svg class="ic" style="left:18px;top:750px" width="18" height="13" viewBox="0 0 18 13"><circle cx="11.6" cy="4.2" r="2.8" fill="#7cc143"/><path d="M6.2 12 C6.2 9.2 8.4 8 11.5 8 C14.6 8 16.8 9.2 16.8 12 Z" fill="#7cc143"/><circle cx="3" cy="6.1" r="1.6" fill="none" stroke="#7cc143" stroke-width="1.1"/><path d="M4.4 6.1 L8 6.1 M7 6.1 L7 7.4" stroke="#7cc143" stroke-width="1.3"/></svg>
<div class="t" style="left:35.5px;top:748.92px;font-size:15px;color:#7cc24a">Login</div>
<svg class="ic" style="left:117px;top:749px" width="17" height="16" viewBox="0 0 17 16"><path d="M0.6 3.4 L12 3.4 M6 1.2 L6 3.4 M3.3 5.3 L8.8 10.8 M10.5 4 L2.2 12.4" fill="none" stroke="#7cc143" stroke-width="1.3" stroke-linecap="round"/><path d="M9.3 14.6 L12.5 6.9 L15.8 14.6 M10.4 12 L14.6 12" fill="none" stroke="#7cc143" stroke-width="1.4" stroke-linecap="round" stroke-linejoin="round"/></svg>
<div class="t" style="left:133.5px;top:748.92px;font-size:15px;color:#7cc24a;letter-spacing:-0.1px">Language</div>
<svg class="ic" style="left:1076px;top:750px" width="14" height="15" viewBox="0 0 14 15"><path d="M7 0.2 C10.9 0.2 14 3.2 14 6.8 C14 8.4 13.3 9.4 12 10 L11.6 13.3 Q11.4 14.2 10.5 14.2 L3.5 14.2 Q2.6 14.2 2.4 13.3 L2 10 C0.7 9.4 0 8.4 0 6.8 C0 3.2 3.1 0.2 7 0.2 Z" fill="#7cc143"/><circle cx="7.2" cy="5.1" r="1.9" fill="#f7f8fc"/><ellipse cx="2.5" cy="5.9" rx="0.8" ry="1.6" fill="#f7f8fc"/><ellipse cx="11.6" cy="5.9" rx="0.8" ry="1.6" fill="#f7f8fc"/><rect x="4.6" y="10.3" width="5" height="2.3" fill="none" stroke="#f7f8fc" stroke-width="0.8"/></svg>
<div class="t" style="left:1091.5px;top:748.92px;font-size:15px;color:#7cc24a;letter-spacing:0.1px">In Standalone-Mode</div>
</body></html>
